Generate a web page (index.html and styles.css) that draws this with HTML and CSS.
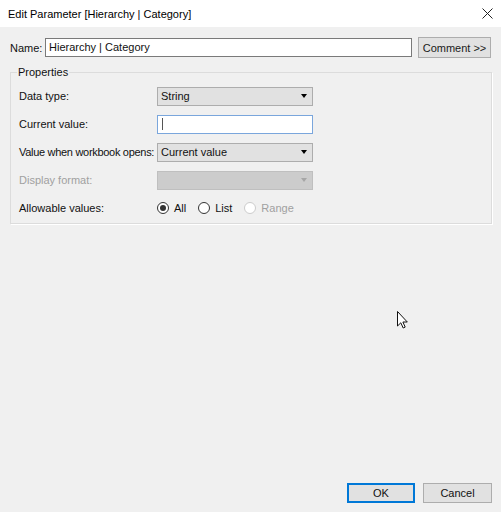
FILE: index.html
```html
<!DOCTYPE html>
<html>
<head>
<meta charset="utf-8">
<link rel="stylesheet" href="styles.css">
</head>
<body>
<div class="window">
  <div class="titlebar">
    <span class="title">Edit Parameter [Hierarchy | Category]</span>
    <svg class="close" width="11" height="11" viewBox="0 0 11 11"><path d="M0.5 0.5 L10.5 10.5 M10.5 0.5 L0.5 10.5" stroke="#222" stroke-width="1" fill="none"/></svg>
  </div>
  <div class="content">
    <div class="name-row">
      <span class="name-label">Name:</span>
      <div class="textbox name-input">Hierarchy | Category</div>
      <div class="button comment">Comment &gt;&gt;</div>
    </div>
    <fieldset class="group">
      <legend class="legend">Properties</legend>
      <div class="row">
        <span class="label">Data type:</span>
        <div class="combo"><span>String</span><span class="arrow"></span></div>
      </div>
      <div class="row">
        <span class="label">Current value:</span>
        <div class="textbox focused"><span class="caret"></span></div>
      </div>
      <div class="row">
        <span class="label tight">Value when workbook opens:</span>
        <div class="combo"><span>Current value</span><span class="arrow"></span></div>
      </div>
      <div class="row">
        <span class="label disabled-text">Display format:</span>
        <div class="combo disabled"><span></span><span class="arrow"></span></div>
      </div>
      <div class="row">
        <span class="label">Allowable values:</span>
        <div class="radios">
          <span class="radio-item"><span class="radio checked"></span>All</span>
          <span class="radio-item"><span class="radio"></span>List</span>
          <span class="radio-item disabled-text"><span class="radio disabled"></span>Range</span>
        </div>
      </div>
    </fieldset>
    <div class="spacer"></div>
    <div class="footer">
      <div class="button ok">OK</div>
      <div class="button cancel">Cancel</div>
    </div>
  </div>
  <svg class="pointer" width="13" height="20" viewBox="0 0 13 20"><path d="M1.5 1.5 L1.5 16 L4.8 12.8 L7.2 18 L9.2 17.1 L6.9 12 L11.3 12 Z" fill="#fff" stroke="#111" stroke-width="1" stroke-linejoin="miter"/></svg>
</div>
</body>
</html>
```
FILE: styles.css
```css
* { box-sizing: border-box; }
html, body { margin: 0; padding: 0; }
body {
  font-family: "Liberation Sans", Arial, sans-serif;
  font-size: 11px;
  color: #111;
  background: #f0f0f0;
}
.window {
  position: relative;
  width: 501px;
  height: 512px;
  display: flex;
  flex-direction: column;
  background: #f0f0f0;
  overflow: hidden;
  white-space: nowrap;
}
.titlebar {
  height: 27px;
  background: #fff;
  display: flex;
  align-items: center;
  justify-content: space-between;
  padding: 0 8px 0 8px;
  flex: none;
}
.title { color: #000; }
.content {
  flex: 1;
  display: flex;
  flex-direction: column;
  padding: 10px 9px 9px 10px;
}
.name-row {
  display: flex;
  align-items: center;
  height: 21px;
}
.name-label { width: 35px; flex: none; }
.textbox {
  height: 19px;
  background: #fff;
  border: 1px solid #7a7a7a;
  display: flex;
  align-items: center;
  padding-left: 3px;
  line-height: 17px;
}
.name-input { width: 367px; }
.button {
  background: #e1e1e1;
  border: 1px solid #adadad;
  display: flex;
  align-items: center;
  justify-content: center;
  height: 21px;
  color: #111;
}
.comment { width: 73px; margin-left: 6px; color: #1a1a1a; }
.group {
  margin: 7px 0 0 0;
  padding: 2px 0 1px 8px;
  border: 1px solid #dcdcdc;
  box-shadow: 1px 1px 0 #fff;
  min-width: 0;
}
.legend {
  padding: 0 1px;
  margin-left: -2px;
  line-height: 15px;
}
.row {
  display: flex;
  align-items: center;
  height: 28px;
}
.label { width: 138px; flex: none; }
.label.tight { letter-spacing: -0.3px; }
.combo {
  width: 156px;
  height: 19px;
  background: #e1e1e1;
  border: 1px solid #adadad;
  display: flex;
  align-items: center;
  justify-content: space-between;
  padding: 0 4px 0 3px;
}
.arrow {
  width: 0;
  height: 0;
  border-left: 3.5px solid transparent;
  border-right: 3.5px solid transparent;
  border-top: 4px solid #000;
  margin-right: 1px;
}
.combo.disabled { background: #cccccc; border-color: #bfbfbf; }
.combo.disabled .arrow { border-top-color: #a6a6a6; }
.textbox.focused { width: 156px; border-color: #7aa6dc; padding-left: 4px; }
.caret { width: 1px; height: 12px; background: #555; }
.disabled-text { color: #a0a0a0; }
.radios { display: flex; align-items: center; }
.radio-item { display: flex; align-items: center; margin-right: 12px; }
.radio {
  width: 12px;
  height: 12px;
  border: 1px solid #333;
  border-radius: 50%;
  background: #fff;
  margin-right: 5px;
  display: flex;
  align-items: center;
  justify-content: center;
}
.radio.checked::after {
  content: "";
  width: 6px;
  height: 6px;
  border-radius: 50%;
  background: #333;
}
.radio.disabled { border-color: #cccccc; background: #fff; }
.spacer { flex: 1; }
.footer {
  display: flex;
  justify-content: flex-end;
  gap: 8px;
}
.ok { width: 68px; height: 20px; border: 1px solid #0078d7; box-shadow: inset 0 0 0 1px #0078d7; }
.cancel { width: 69px; height: 20px; }
.pointer { position: absolute; left: 396px; top: 310px; }
```
